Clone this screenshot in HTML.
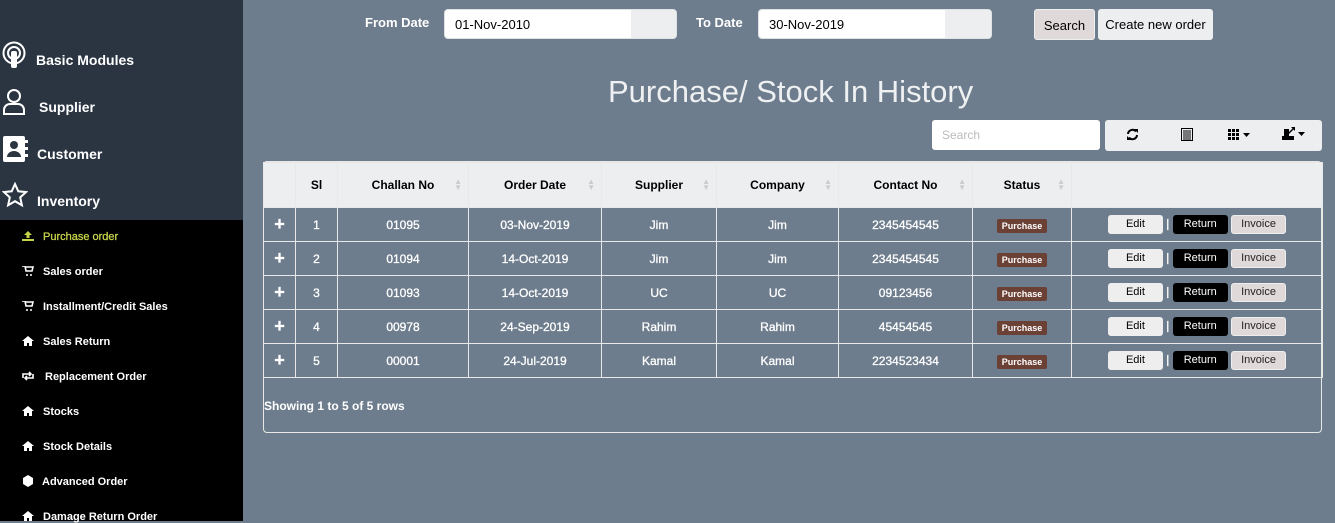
<!DOCTYPE html>
<html><head><meta charset="utf-8"><style>
*{box-sizing:border-box;margin:0;padding:0}
body{width:1335px;height:521px;overflow:hidden;background:#6e7d8d;font-family:"Liberation Sans",Arial,sans-serif;position:relative}
.sb{position:absolute;left:0;top:0;width:243px;height:220px;background:#2b3542}
.sb2{position:absolute;left:0;top:220px;width:243px;height:301px;background:#000}
.m{position:absolute;color:#fff;font-size:14px;font-weight:bold}
.s{position:absolute;color:#fff;font-size:11px;font-weight:bold;left:43px}
.si{position:absolute;left:22px}
.a{position:absolute}
.lbl{position:absolute;color:#fff;font-size:13px;font-weight:bold;top:15px}
.inp{position:absolute;top:9px;height:30px;background:#eceeef;border-radius:4px;border:1px solid #dfe3e6}
.inp div{position:absolute;left:0;top:0;bottom:0;width:186px;background:#fff;border-radius:4px 0 0 4px;font-size:13px;padding:7px 10px;color:#000}
.btn{position:absolute;top:9px;height:31px;border-radius:3px;font-size:13px;color:#000;text-align:center;line-height:31px}
table{position:absolute;left:263px;top:162px;border-collapse:collapse;font-size:12px;color:#fff}
td,th{border:1px solid #e8e8e8;text-align:center;height:34px}
td{font-weight:normal;-webkit-text-stroke:.3px #fff}
th{background:#eceeef;color:#000;height:45px;font-size:12px;position:relative;font-weight:bold}
th .ar{position:absolute;right:6px;top:16px;color:#ccc;font-size:8px;line-height:6px}
.wrap{position:absolute;left:263px;top:161px;width:1059px;height:272px;border:1px solid #e8e8e8;border-radius:4px}
.badge{background:#6b4136;color:#fff;font-size:9px;padding:2px 5px;border-radius:2px;font-weight:bold;-webkit-text-stroke:0}
.b{display:inline-block;height:19px;line-height:19px;font-size:11px;border-radius:3px;vertical-align:middle;font-weight:normal;-webkit-text-stroke:0}
.e{background:#eee;color:#000;width:55px}
.r{background:#000;color:#fff;width:55px}
.iv{background:#e0d9d9;color:#222;width:55px;border:1px solid #eee;line-height:17px}
.pl{font-size:18px;font-weight:bold}
</style></head><body>
<div class="sb"></div><div class="sb2"></div>
<svg class="a" style="left:2px;top:41px" width="24" height="28" viewBox="0 0 24 28"><circle cx="12" cy="12" r="10.5" fill="none" stroke="#fff" stroke-width="2"/><circle cx="12" cy="12" r="6" fill="none" stroke="#fff" stroke-width="2"/><rect x="9" y="10" width="6" height="17" rx="2" fill="#fff"/></svg>
<div class="m" style="left:36px;top:52px">Basic Modules</div>
<svg class="a" style="left:2px;top:88px" width="24" height="28" viewBox="0 0 24 28"><circle cx="12" cy="8" r="6" fill="none" stroke="#fff" stroke-width="2"/><path d="M2 26v-4a6 6 0 0 1 6-6h8a6 6 0 0 1 6 6v4z" fill="none" stroke="#fff" stroke-width="2"/></svg>
<div class="m" style="left:39px;top:99px">Supplier</div>
<svg class="a" style="left:2px;top:135px" width="26" height="28" viewBox="0 0 26 28"><rect x="1" y="1" width="22" height="26" rx="2" fill="#fff"/><circle cx="12" cy="10" r="4" fill="#2b3542"/><path d="M5 22a7 6 0 0 1 14 0z" fill="#2b3542"/><rect x="23" y="5" width="3" height="3" fill="#fff"/><rect x="23" y="12" width="3" height="3" fill="#fff"/><rect x="23" y="19" width="3" height="3" fill="#fff"/></svg>
<div class="m" style="left:37px;top:146px">Customer</div>
<svg class="a" style="left:2px;top:182px" width="26" height="26" viewBox="0 0 26 26"><path d="M13 2l3.3 7.3 7.7.8-5.8 5.3 1.7 7.8L13 19.2 6.1 23.2l1.7-7.8L2 10.1l7.7-.8z" fill="none" stroke="#fff" stroke-width="2"/></svg>
<div class="m" style="left:37px;top:193px">Inventory</div>

<svg class="si" style="top:231px" width="12" height="10" viewBox="0 0 12 10"><path d="M6 0L10 4H7.5V7h-3V4H2z M0 8h12v2H0z" fill="#c6d44a"/></svg>
<div class="s" style="top:231px;color:#c6d44a;font-weight:normal;-webkit-text-stroke:.3px #c6d44a">Purchase order</div>
<svg class="si" style="top:266px" width="12" height="10" viewBox="0 0 12 10"><path d="M0 0h3l1 5h6l1-4H4" fill="none" stroke="#fff" stroke-width="1.6"/><circle cx="5" cy="9" r="1" fill="#fff"/><circle cx="9" cy="9" r="1" fill="#fff"/></svg>
<div class="s" style="top:266px">Sales order</div>
<svg class="si" style="top:301px" width="12" height="10" viewBox="0 0 12 10"><path d="M0 0h3l1 5h6l1-4H4" fill="none" stroke="#fff" stroke-width="1.6"/><circle cx="5" cy="9" r="1" fill="#fff"/><circle cx="9" cy="9" r="1" fill="#fff"/></svg>
<div class="s" style="top:301px">Installment/Credit Sales</div>
<svg class="si" style="top:336px" width="12" height="10" viewBox="0 0 12 10"><path d="M6 0L12 5H10V10H7V7H5V10H2V5H0z" fill="#fff"/></svg>
<div class="s" style="top:336px">Sales Return</div>
<svg class="si" style="top:371px" width="12" height="10" viewBox="0 0 12 10"><path d="M1 7V3h8M7 1l2 2-2 2M11 3v4H3M5 9L3 7l2-2" fill="none" stroke="#fff" stroke-width="1.6"/></svg>
<div class="s" style="top:371px;left:45px">Replacement Order</div>
<svg class="si" style="top:406px" width="12" height="10" viewBox="0 0 12 10"><path d="M6 0L12 5H10V10H7V7H5V10H2V5H0z" fill="#fff"/></svg>
<div class="s" style="top:406px">Stocks</div>
<svg class="si" style="top:441px" width="12" height="10" viewBox="0 0 12 10"><path d="M6 0L12 5H10V10H7V7H5V10H2V5H0z" fill="#fff"/></svg>
<div class="s" style="top:441px">Stock Details</div>
<svg class="si" style="top:475px" width="12" height="12" viewBox="0 0 12 12"><path d="M6 0L11 3V9L6 12L1 9V3z" fill="#fff"/></svg>
<div class="s" style="top:476px;left:42px">Advanced Order</div>
<svg class="si" style="top:511px" width="12" height="10" viewBox="0 0 12 10"><path d="M6 0L12 5H10V10H7V7H5V10H2V5H0z" fill="#fff"/></svg>
<div class="s" style="top:511px">Damage Return Order</div>

<div class="lbl" style="left:365px">From Date</div>
<div class="inp" style="left:444px;width:233px"><div>01-Nov-2010</div></div>
<div class="lbl" style="left:696px">To Date</div>
<div class="inp" style="left:758px;width:234px"><div>30-Nov-2019</div></div>
<div class="btn" style="left:1034px;width:61px;background:#e0d9d9;border:1px solid #eee">Search</div>
<div class="btn" style="left:1098px;width:115px;background:#eceeef">Create new order</div>

<div class="a" style="left:608px;top:74px;color:#eef0f2;font-size:31px">Purchase/ Stock In History</div>
<div class="a" style="left:932px;top:120px;width:168px;height:30px;background:#fff;border-radius:3px;color:#bbb;font-size:12px;padding:8px 10px">Search</div>
<div class="a" style="left:1105px;top:120px;width:217px;height:31px;background:#eceeef;border-radius:3px">
<svg class="a" style="left:21px;top:8px" width="13" height="13" viewBox="0 0 13 13"><path d="M2 6a4.5 4.5 0 0 1 8-2.5M11 7a4.5 4.5 0 0 1-8 2.5" fill="none" stroke="#000" stroke-width="2"/><path d="M8 1h4v4zM5 12H1V8z" fill="#000"/></svg>
<svg class="a" style="left:76px;top:8px" width="12" height="13" viewBox="0 0 12 13"><rect x="0.5" y="0.5" width="11" height="12" fill="none" stroke="#000"/><path d="M2 3h8M2 5h8M2 7h8M2 9h8M2 11h8" stroke="#000"/></svg>
<svg class="a" style="left:123px;top:9px" width="26" height="11" viewBox="0 0 26 11"><g fill="#000"><rect x="0" y="0" width="3" height="3"/><rect x="4" y="0" width="3" height="3"/><rect x="8" y="0" width="3" height="3"/><rect x="0" y="4" width="3" height="3"/><rect x="4" y="4" width="3" height="3"/><rect x="8" y="4" width="3" height="3"/><rect x="0" y="8" width="3" height="3"/><rect x="4" y="8" width="3" height="3"/><rect x="8" y="8" width="3" height="3"/><path d="M15 4h7l-3.5 4z"/></g></svg>
<svg class="a" style="left:177px;top:7px" width="26" height="13" viewBox="0 0 26 13"><g fill="#000"><rect x="0" y="9" width="12" height="4"/><rect x="2" y="2" width="5" height="7"/><path d="M6 6l5-5 1 1-5 5z"/><path d="M9 0h4v4z"/><path d="M16 5h7l-3.5 4z"/></g></svg>
</div>

<div class="wrap"></div>
<table>
<tr><th style="width:32px"></th><th style="width:42px">Sl</th><th style="width:131px">Challan No<span class="ar">▲<br>▼</span></th><th style="width:133px">Order Date<span class="ar">▲<br>▼</span></th><th style="width:115px">Supplier<span class="ar">▲<br>▼</span></th><th style="width:122px">Company<span class="ar">▲<br>▼</span></th><th style="width:134px">Contact No<span class="ar">▲<br>▼</span></th><th style="width:99px">Status<span class="ar">▲<br>▼</span></th><th style="width:251px"></th></tr>
<tr><td class="pl">+</td><td>1</td><td>01095</td><td>03-Nov-2019</td><td>Jim</td><td>Jim</td><td>2345454545</td><td><span class="badge">Purchase</span></td><td><span class="b e">Edit</span> | <span class="b r">Return</span> <span class="b iv">Invoice</span></td></tr>
<tr><td class="pl">+</td><td>2</td><td>01094</td><td>14-Oct-2019</td><td>Jim</td><td>Jim</td><td>2345454545</td><td><span class="badge">Purchase</span></td><td><span class="b e">Edit</span> | <span class="b r">Return</span> <span class="b iv">Invoice</span></td></tr>
<tr><td class="pl">+</td><td>3</td><td>01093</td><td>14-Oct-2019</td><td>UC</td><td>UC</td><td>09123456</td><td><span class="badge">Purchase</span></td><td><span class="b e">Edit</span> | <span class="b r">Return</span> <span class="b iv">Invoice</span></td></tr>
<tr><td class="pl">+</td><td>4</td><td>00978</td><td>24-Sep-2019</td><td>Rahim</td><td>Rahim</td><td>45454545</td><td><span class="badge">Purchase</span></td><td><span class="b e">Edit</span> | <span class="b r">Return</span> <span class="b iv">Invoice</span></td></tr>
<tr><td class="pl">+</td><td>5</td><td>00001</td><td>24-Jul-2019</td><td>Kamal</td><td>Kamal</td><td>2234523434</td><td><span class="badge">Purchase</span></td><td><span class="b e">Edit</span> | <span class="b r">Return</span> <span class="b iv">Invoice</span></td></tr>
</table>
<div class="a" style="left:264px;top:399px;color:#fff;font-size:12px;font-weight:bold">Showing 1 to 5 of 5 rows</div>
</body></html>
